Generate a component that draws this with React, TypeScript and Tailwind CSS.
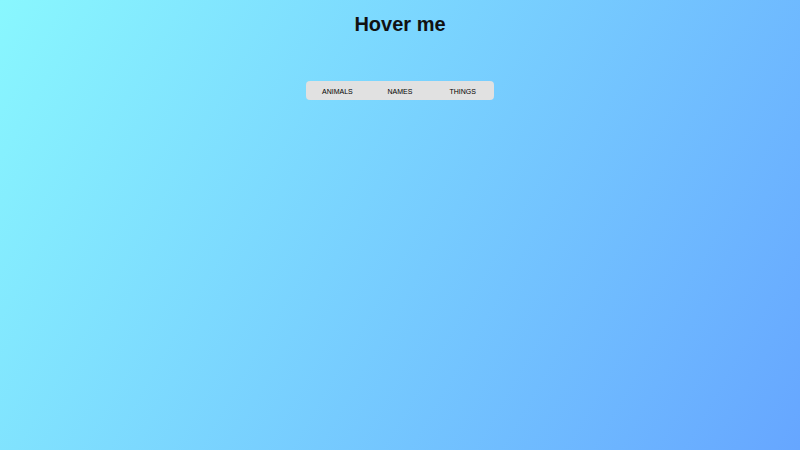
const items = ["ANIMALS", "NAMES", "THINGS"];

export default function App() {
    return (
        <div className="flex h-[450px] w-[800px] flex-col items-center bg-[linear-gradient(120deg,#89f7fe_0%,#66a6ff_100%)] font-['Liberation_Sans',Arial,sans-serif]">
            <h1 className="mt-[12px] text-[20px] font-bold leading-[24px] text-[#111]">Hover me</h1>

            <nav className="mt-[45px] flex h-[19px] w-[188px] items-center rounded-[4px] bg-[#e1e1e1] pt-[1px]">
                {items.map((item) => (
                    <a
                        key={item}
                        href="#"
                        className="flex-1 text-center text-[7px] font-normal leading-none text-black"
                    >
                        {item}
                    </a>
                ))}
            </nav>
        </div>
    );
}
